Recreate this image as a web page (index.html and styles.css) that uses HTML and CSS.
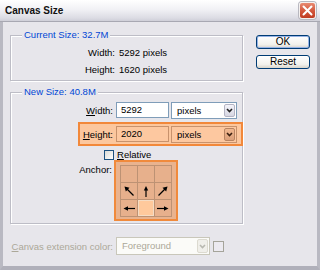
FILE: index.html
```html
<!DOCTYPE html>
<html lang="en">
<head>
    <meta charset="UTF-8">
    <meta name="viewport" content="width=device-width, initial-scale=1.0">
    <title>Canvas Size</title>
    <link rel="stylesheet" href="styles.css">
</head>
<body>
    <div class="window">
        <div class="titlebar">
            <span class="title">Canvas Size</span>
            <span class="close">
                <svg width="11" height="11" viewBox="0 0 11 11"><path d="M1.5 1.5L9.5 9.5M9.5 1.5L1.5 9.5" stroke="#fff" stroke-width="2" stroke-linecap="round"/></svg>
            </span>
        </div>
        <div class="content">
            <div class="main">
                <div class="group current">
                    <span class="legend">Current Size: 32.7M</span>
                    <div class="info-row"><span class="info-label">Width:</span><span>5292 pixels</span></div>
                    <div class="info-row"><span class="info-label">Height:</span><span>1620 pixels</span></div>
                </div>

                <div class="group newsize">
                    <span class="legend">New Size: 40.8M</span>
                    <div class="field-row">
                        <span class="field-label"><u>W</u>idth:</span>
                        <div class="textbox">5292</div>
                        <div class="dropdown">
                            <span class="dropdown-text">pixels</span>
                            <span class="dropdown-btn"><svg width="7" height="5" viewBox="0 0 7 5"><path d="M1 1L3.5 3.5L6 1" fill="none" stroke="#222" stroke-width="1.6"/></svg></span>
                        </div>
                    </div>
                    <div class="field-row highlight">
                        <span class="field-label"><u>H</u>eight:</span>
                        <div class="textbox">2020</div>
                        <div class="dropdown">
                            <span class="dropdown-text">pixels</span>
                            <span class="dropdown-btn"><svg width="7" height="5" viewBox="0 0 7 5"><path d="M1 1L3.5 3.5L6 1" fill="none" stroke="#3a2010" stroke-width="1.6"/></svg></span>
                        </div>
                    </div>
                    <div class="check-row">
                        <span class="checkbox"></span>
                        <span><u>R</u>elative</span>
                    </div>
                    <div class="anchor-row">
                        <span class="anchor-label">Anchor:</span>
                        <div class="anchor-frame">
                            <div class="anchor-grid">
                                <span class="cell"></span>
                                <span class="cell"></span>
                                <span class="cell"></span>
                                <span class="cell"><svg width="16" height="16" viewBox="0 0 16 16"><path d="M12.5 12.5L6 6" stroke="#000" stroke-width="1.2"/><path d="M3.5 3.5L8.5 4.8L4.8 8.5Z"/></svg></span>
                                <span class="cell"><svg width="16" height="16" viewBox="0 0 16 16"><path d="M8 14V6" stroke="#000" stroke-width="1.2"/><path d="M8 3L10.2 7.5H5.8Z"/></svg></span>
                                <span class="cell"><svg width="16" height="16" viewBox="0 0 16 16"><path d="M3.5 12.5L10 6" stroke="#000" stroke-width="1.2"/><path d="M12.5 3.5L11.2 8.5L7.5 4.8Z"/></svg></span>
                                <span class="cell"><svg width="16" height="16" viewBox="0 0 16 16"><path d="M14 8.5H6" stroke="#000" stroke-width="1.2"/><path d="M2.5 8.5L7 6.3V10.7Z"/></svg></span>
                                <span class="cell selected"></span>
                                <span class="cell"><svg width="16" height="16" viewBox="0 0 16 16"><path d="M2 8.5H10" stroke="#000" stroke-width="1.2"/><path d="M13.5 8.5L9 6.3V10.7Z"/></svg></span>
                            </div>
                        </div>
                    </div>
                </div>

                <div class="ext-row">
                    <span class="ext-label"><u>C</u>anvas extension color:</span>
                    <div class="dropdown disabled">
                        <span class="dropdown-text">Foreground</span>
                        <span class="dropdown-btn"><svg width="7" height="5" viewBox="0 0 7 5"><path d="M1 1L3.5 3.5L6 1" fill="none" stroke="#b8b8b0" stroke-width="1.6"/></svg></span>
                    </div>
                    <span class="swatch"></span>
                </div>
            </div>

            <div class="side">
                <div class="btn default">OK</div>
                <div class="btn">Reset</div>
            </div>
        </div>
    </div>
</body>
</html>
```

FILE: styles.css
```css
body {
    margin: 0;
    font-family: "Liberation Sans", Arial, sans-serif;
    font-size: 9.5px;
    color: #000;
}
.window {
    width: 320px;
    height: 270px;
    box-sizing: border-box;
    background-color: #e7e6eb;
    border-left: 3px solid #b9b9c2;
    border-right: 3px solid #b9b9c2;
    border-bottom: 4px solid #b0b0ba;
    position: relative;
}
.titlebar {
    height: 21px;
    margin: 0 -3px;
    padding: 0 4px 0 5px;
    display: flex;
    align-items: center;
    justify-content: space-between;
    background: linear-gradient(#ffffff, #f1f1f5 45%, #dcdce4 85%, #cfcfd8);
    border-bottom: 1px solid #a8a8b2;
}
.title {
    font-size: 10px;
    font-weight: bold;
    color: #111;
}
.close {
    width: 17px;
    height: 17px;
    box-sizing: border-box;
    display: flex;
    align-items: center;
    justify-content: center;
    border: 1px solid #f4f0ee;
    border-radius: 3px;
    background: linear-gradient(#e88a72, #d2553a 55%, #c03c22);
    box-shadow: 0 0 0 1px #b8b8c0;
}
.content {
    display: flex;
    padding-left: 7px;
}
.main {
    width: 233px;
}
.group {
    position: relative;
    border: 1px solid #bdbdc6;
    box-shadow: inset 1px 1px 0 #fff, 1px 1px 0 #fff;
}
.legend {
    position: absolute;
    top: -7px;
    left: 11px;
    padding: 0 2px;
    line-height: 12px;
    background-color: #e7e6eb;
    color: #0046d5;
}
.current {
    margin-top: 13px;
    padding: 8px 0 2px;
}
.info-row {
    display: flex;
    height: 17px;
    align-items: center;
}
.info-label {
    width: 104px;
    margin-right: 4px;
    text-align: right;
}
.newsize {
    margin-top: 11px;
    padding: 5px 0 2px;
}
.field-row {
    display: flex;
    align-items: center;
    height: 24px;
    box-sizing: border-box;
    margin: 0 -1px 0 67px;
    border: 2px solid transparent;
}
.field-label {
    width: 33px;
    margin-right: 3px;
    text-align: right;
}
.textbox {
    width: 53px;
    height: 16px;
    box-sizing: border-box;
    padding-left: 4px;
    line-height: 14px;
    border: 1px solid #7f9db9;
    background-color: #fff;
}
.dropdown {
    width: 66px;
    height: 17px;
    box-sizing: border-box;
    margin-left: 2px;
    display: flex;
    border: 1px solid #7f9db9;
    background-color: #fff;
}
.dropdown-text {
    flex: 1;
    padding-left: 5px;
    line-height: 15px;
}
.dropdown-btn {
    width: 11px;
    margin: 1px;
    display: flex;
    align-items: center;
    justify-content: center;
    border-radius: 2px;
    background: linear-gradient(#f4f4fa, #d6d6e2);
    border: 1px solid #b4b4c4;
    box-sizing: border-box;
}
.highlight {
    border-color: #f2883a;
    background-color: #fcc79e;
}
.highlight .textbox {
    border-color: #c8926c;
    background-color: #fdc8a0;
}
.highlight .dropdown {
    border-color: #c8926c;
    background-color: #fdc8a0;
}
.highlight .dropdown-btn {
    background: linear-gradient(#f0b890, #dca07a);
    border-color: #b88462;
}
.check-row {
    display: flex;
    align-items: center;
    height: 11px;
    margin-top: 3px;
    padding-left: 93px;
}
.checkbox {
    width: 10px;
    height: 10px;
    box-sizing: border-box;
    margin-right: 3px;
    border: 1px solid #1c5180;
    background: linear-gradient(135deg, #dcdcd7, #ffffff);
}
.anchor-row {
    display: flex;
}
.anchor-label {
    width: 101px;
    margin-right: 2px;
    padding-top: 4px;
    text-align: right;
}
.anchor-frame {
    padding: 3px 4px 2px 4px;
    border: 2px solid #f08a3c;
    background-color: #e9b38f;
}
.anchor-grid {
    display: grid;
    grid-template-columns: repeat(3, 16px);
    grid-auto-rows: 16px;
    gap: 1px;
    border: 1px solid #bd9274;
    background-color: #bd9274;
}
.cell {
    display: flex;
    background-color: #e7b08c;
}
.cell.selected {
    background-color: #ffc99c;
    box-shadow: inset 0 0 0 1px #f5dcc4;
}
.ext-row {
    display: flex;
    align-items: center;
    margin-top: 13px;
}
.ext-label {
    width: 103px;
    margin-right: 3px;
    text-align: right;
    color: #aca899;
}
.dropdown.disabled {
    width: 94px;
    height: 18px;
    margin-left: 0;
    border-color: #c9c7ba;
    background-color: #fbfbf8;
    color: #aca899;
}
.disabled .dropdown-text {
    line-height: 16px;
}
.disabled .dropdown-btn {
    background: #f0efea;
    border-color: #dcdad0;
}
.swatch {
    width: 11px;
    height: 11px;
    box-sizing: border-box;
    margin-left: 3px;
    border: 1px solid #a5a49a;
    background-color: #eceaf0;
}
.side {
    margin-left: 13px;
    margin-top: 13px;
}
.btn {
    width: 54px;
    height: 14px;
    box-sizing: border-box;
    border: 1px solid #003c74;
    border-radius: 3px;
    background: linear-gradient(#ffffff, #f2f1ec 70%, #d8d4ca);
    text-align: center;
    line-height: 12px;
    font-size: 10px;
}
.btn + .btn {
    margin-top: 6px;
}
.btn.default {
    box-shadow: inset 0 0 0 1px #98b4e6;
}
```
